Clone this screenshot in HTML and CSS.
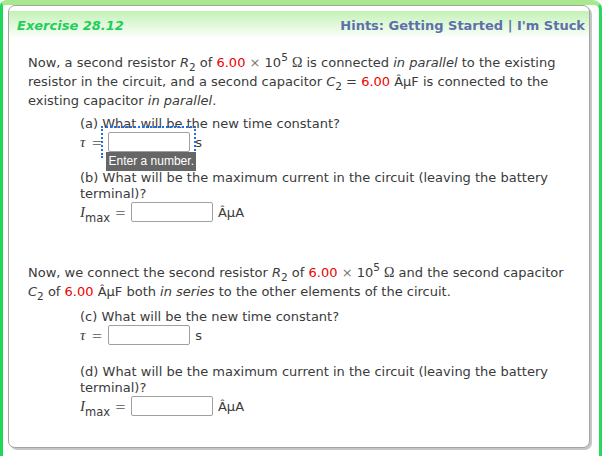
FILE: index.html
```html
<!DOCTYPE html>
<html>
<head>
<meta charset="utf-8">
<link rel="stylesheet" href="styles.css">
</head>
<body>
<div class="frame">
  <div class="card">
    <div class="header">
      <span class="title">Exercise 28.12</span>
      <span class="hints">Hints: Getting Started | I'm Stuck</span>
    </div>
    <div class="content">
      <p class="para p1">Now, a second resistor <i>R</i><sub>2</sub> of <span class="red">6.00</span> <span class="times">×</span> 10<sup>5</sup> <span class="ohm">Ω</span> is connected <i>in parallel</i> to the existing resistor in the circuit, and a second capacitor <i>C</i><sub>2</sub> = <span class="red">6.00</span> ÂμF is connected to the existing capacitor <i>in parallel</i>.</p>

      <div class="q qa">(a) What will be the new time constant?</div>
      <div class="row">
        <span class="sym tau">τ</span><span class="eq">=</span>
        <span class="focus"><input class="box" type="text"><span class="unit">s</span><span class="tip">Enter a number.</span></span>
      </div>

      <div class="q qb">(b) What will be the maximum current in the circuit (leaving the battery terminal)?</div>
      <div class="row">
        <span class="sym imax"><i>I</i><sub>max</sub></span><span class="eq">=</span>
        <input class="box" type="text"><span class="unit">ÂμA</span>
      </div>

      <p class="para p2">Now, we connect the second resistor <i>R</i><sub>2</sub> of <span class="red">6.00</span> <span class="times">×</span> 10<sup>5</sup> <span class="ohm">Ω</span> and the second capacitor <i>C</i><sub>2</sub> of <span class="red">6.00</span> ÂμF both <i>in series</i> to the other elements of the circuit.</p>

      <div class="q qc">(c) What will be the new time constant?</div>
      <div class="row">
        <span class="sym tau">τ</span><span class="eq">=</span>
        <input class="box" type="text"><span class="unit">s</span>
      </div>

      <div class="q qd">(d) What will be the maximum current in the circuit (leaving the battery terminal)?</div>
      <div class="row">
        <span class="sym imax"><i>I</i><sub>max</sub></span><span class="eq">=</span>
        <input class="box" type="text"><span class="unit">ÂμA</span>
      </div>
    </div>
  </div>
</div>
</body>
</html>
```
FILE: styles.css
```css
html, body {
  margin: 0;
  padding: 0;
  background: #ffffff;
}
.frame {
  width: 602px;
  height: 456px;
  box-sizing: border-box;
  border-top: 5px solid #a8e990;
  border-left: 3px solid #1fd85a;
  border-right: 3px solid #2ad85e;
  border-top-left-radius: 6px;
  border-top-right-radius: 9px;
  padding: 0 7px 0 5px;
  font-family: "DejaVu Sans", Verdana, sans-serif;
}
.card {
  height: 443px;
  box-sizing: border-box;
  border: 1px solid #a4a4a4;
  border-radius: 7px;
  box-shadow: 2px 2px 0 #c6c6c6;
  padding-top: 5px;
  background: #fff;
  width: 582px;
}
.header {
  height: 26px;
  box-sizing: border-box;
  padding: 2px 4px 0 8px;
  display: flex;
  align-items: center;
  justify-content: space-between;
  background: linear-gradient(#c3f1b6, #fbfffa);
  font-size: 13px;
  font-weight: bold;
}
.title {
  color: #1ecf58;
  font-style: italic;
}
.hints {
  color: #5c71a9;
}
.content {
  padding-left: 19px;
  color: #3a3a3a;
  font-size: 13px;
}
.para {
  margin: 0;
  line-height: 19px;
  width: 545px;
}
.p1 { margin-top: 16px; }
.p2 { margin-top: 41px; }
.red { color: #ee0000; }
.times { color: #777; }
.ohm { font-family: "Liberation Serif", serif; font-size: 14px; }
sub {
  font-size: 10.5px;
  line-height: 0;
  vertical-align: -4px;
}
sup {
  font-size: 10.5px;
  line-height: 0;
  vertical-align: 6px;
}
.q {
  margin-left: 52px;
  line-height: 16px;
  width: 485px;
}
.qa { margin-top: 6px; }
.qb { margin-top: 18px; }
.qc { margin-top: 8px; }
.qd { margin-top: 19px; }
.row {
  margin-left: 52px;
  height: 20px;
  display: flex;
  align-items: center;
}
.sym {
  font-family: "Liberation Serif", serif;
  font-style: italic;
  font-size: 15px;
}
.imax sub {
  font-family: "DejaVu Sans", sans-serif;
  font-style: normal;
  font-size: 11.5px;
  vertical-align: -5px;
}
.tau { margin-right: 6px; }
.tau + .eq { margin-right: 6px; }
.imax { margin-right: 5px; }
.imax + .eq { margin-right: 5px; }
.eq {
  color: #777;
  margin-right: 8px;
}
.box {
  width: 82px;
  height: 20px;
  box-sizing: border-box;
  border: 1px solid #a0a0a0;
  border-radius: 2px;
  margin: 0;
  padding: 0;
  background: #fff;
}
.unit {
  margin-left: 5px;
}
.focus {
  position: relative;
  display: flex;
  align-items: center;
}
.focus::before {
  content: "";
  position: absolute;
  left: -7px;
  top: -6px;
  width: 91px;
  height: 28px;
  border: 2px dotted #1f6fe0;
  pointer-events: none;
}
.tip {
  position: absolute;
  left: -2px;
  top: 20px;
  width: 90px;
  height: 19px;
  background: #666666;
  color: #ffffff;
  font-family: "Liberation Sans", Arial, sans-serif;
  font-size: 12px;
  line-height: 19px;
  text-align: center;
}
```
